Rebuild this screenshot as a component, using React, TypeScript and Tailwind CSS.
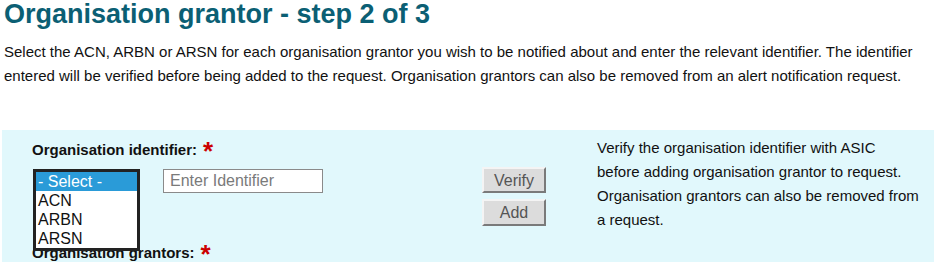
import React from "react";

const options = ["- Select -", "ACN", "ARBN", "ARSN"];

function Required() {
  return (
    <span className="relative top-[6px] ml-[6px] inline-block align-top text-[26px] font-bold leading-[14px] text-[#cc0000]">
      *
    </span>
  );
}

export default function App() {
  return (
    <div className="h-[262px] w-[934px] overflow-hidden bg-white font-['Arial','Liberation_Sans',sans-serif] text-[#111]">
      <h1 className="pl-[4px] text-[27px] font-bold leading-[28px] text-[#0b5f74]">
        Organisation grantor - step 2 of 3
      </h1>
      <p className="mt-[12px] w-[920px] pl-[4px] text-[15px] leading-[24px]">
        Select the ACN, ARBN or ARSN for each organisation grantor you wish to be notified about and enter the relevant
        identifier. The identifier entered will be verified before being added to the request. Organisation grantors can
        also be removed from an alert notification request.
      </p>

      <div className="ml-[2px] mt-[42px] flex h-[200px] bg-[#e1f8fc]">
        <div className="w-[595px] shrink-0 pl-[30px] pt-[8px]">
          <div className="text-[15px] font-bold leading-[24px]">
            Organisation identifier:
            <Required />
          </div>

          <div className="mt-[7px] flex items-start">
            <div className="relative ml-[1px] h-[24px] w-[107px]">
              <ul className="absolute left-0 top-0 z-10 w-[107px] border-[3px] border-[#222] bg-white text-[16px] leading-[19px]">
                {options.map((option, i) => (
                  <li
                    key={option}
                    className={i === 0 ? "h-[19px] bg-[#2a9bd8] pl-[2px] text-white" : "h-[19px] pl-[2px] text-[#111]"}
                  >
                    {option}
                  </li>
                ))}
              </ul>
            </div>
            <input
              placeholder="Enter Identifier"
              className="ml-[23px] h-[24px] w-[160px] border border-[#8a8a8a] bg-white px-[6px] text-[16px] text-[#111] placeholder:text-[#7a7a7a]"
            />
            <div className="-mt-[2px] ml-[159px] flex flex-col gap-[6px]">
              <button
                type="button"
                className="h-[26px] w-[64px] border-2 border-b-[#7a7a7a] border-l-[#f4f4f4] border-r-[#7a7a7a] border-t-[#f4f4f4] bg-[#dcdcdc] text-[16px] text-[#555]"
              >
                Verify
              </button>
              <button
                type="button"
                className="h-[27px] w-[64px] border-2 border-b-[#7a7a7a] border-l-[#f4f4f4] border-r-[#7a7a7a] border-t-[#f4f4f4] bg-[#dcdcdc] text-[16px] text-[#555]"
              >
                Add
              </button>
            </div>
          </div>

          <div className="mt-[15px] text-[15px] font-bold leading-[24px]">
            Organisation grantors:
            <Required />
          </div>
        </div>

        <p className="w-[323px] pt-[6px] text-[15px] leading-[24px]">
          Verify the organisation identifier with ASIC before adding organisation grantor to request. Organisation
          grantors can also be removed from a request.
        </p>
      </div>
    </div>
  );
}
